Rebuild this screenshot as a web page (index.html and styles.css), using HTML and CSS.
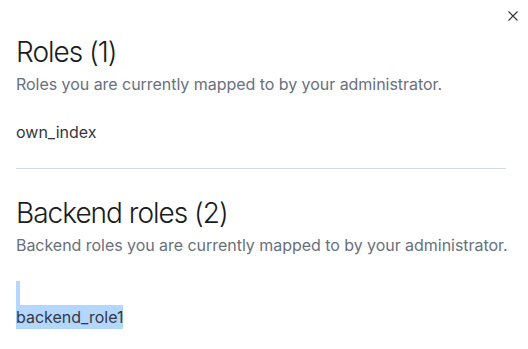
FILE: index.html
```html
<!DOCTYPE html>
<html lang="en">
<head>
    <meta charset="UTF-8">
    <title>Roles</title>
    <link rel="stylesheet" href="styles.css">
</head>
<body>

<div class="flyout">
    <button class="close-button" aria-label="Close">
        <svg width="10" height="10" viewBox="0 0 10 10">
            <path d="M0.5 0.5 L9.5 9.5 M9.5 0.5 L0.5 9.5" stroke="#343741" stroke-width="1.1" fill="none"/>
        </svg>
    </button>

    <section class="role-section">
        <h2 class="title">Roles (1)</h2>
        <p class="subtitle">Roles you are currently mapped to by your administrator.</p>
        <ul class="role-list">
            <li>own_index</li>
        </ul>
    </section>

    <hr class="divider">

    <section class="role-section">
        <h2 class="title">Backend roles (2)</h2>
        <p class="subtitle">Backend roles you are currently mapped to by your administrator.</p>
        <ul class="role-list">
            <li><span class="selected-empty"></span></li>
            <li><span class="selected">backend_role1</span></li>
        </ul>
    </section>
</div>

</body>
</html>
```

FILE: styles.css
```css
body {
    margin: 0;
    background: #fff;
    font-family: Inter, "Noto Sans", sans-serif;
    color: #343741;
}

.flyout {
    position: relative;
    padding: 32px 22px 0 16px;
}

.close-button {
    position: absolute;
    top: 11px;
    right: 10px;
    width: 10px;
    height: 10px;
    padding: 0;
    border: none;
    background: none;
    display: flex;
}

.title {
    margin: 0;
    font-size: 28px;
    line-height: 40px;
    font-weight: 300;
    letter-spacing: -1px;
    color: #1a1c21;
}

.subtitle {
    margin: 0;
    font-size: 16px;
    line-height: 24px;
    letter-spacing: -0.04px;
    white-space: nowrap;
    color: #69707d;
}

.role-list {
    list-style: none;
    margin: 24px 0 0;
    padding: 0;
    font-size: 16px;
    line-height: 24px;
    color: #343741;
}

.role-list li {
    height: 24px;
    display: flex;
}

.selected-empty {
    width: 4px;
    height: 24px;
    background: #b3d7ff;
}

.selected {
    background: #b3d7ff;
    line-height: 24px;
}

.divider {
    margin: 24px 0;
    border: none;
    border-top: 1px solid #d3dae6;
}
```
